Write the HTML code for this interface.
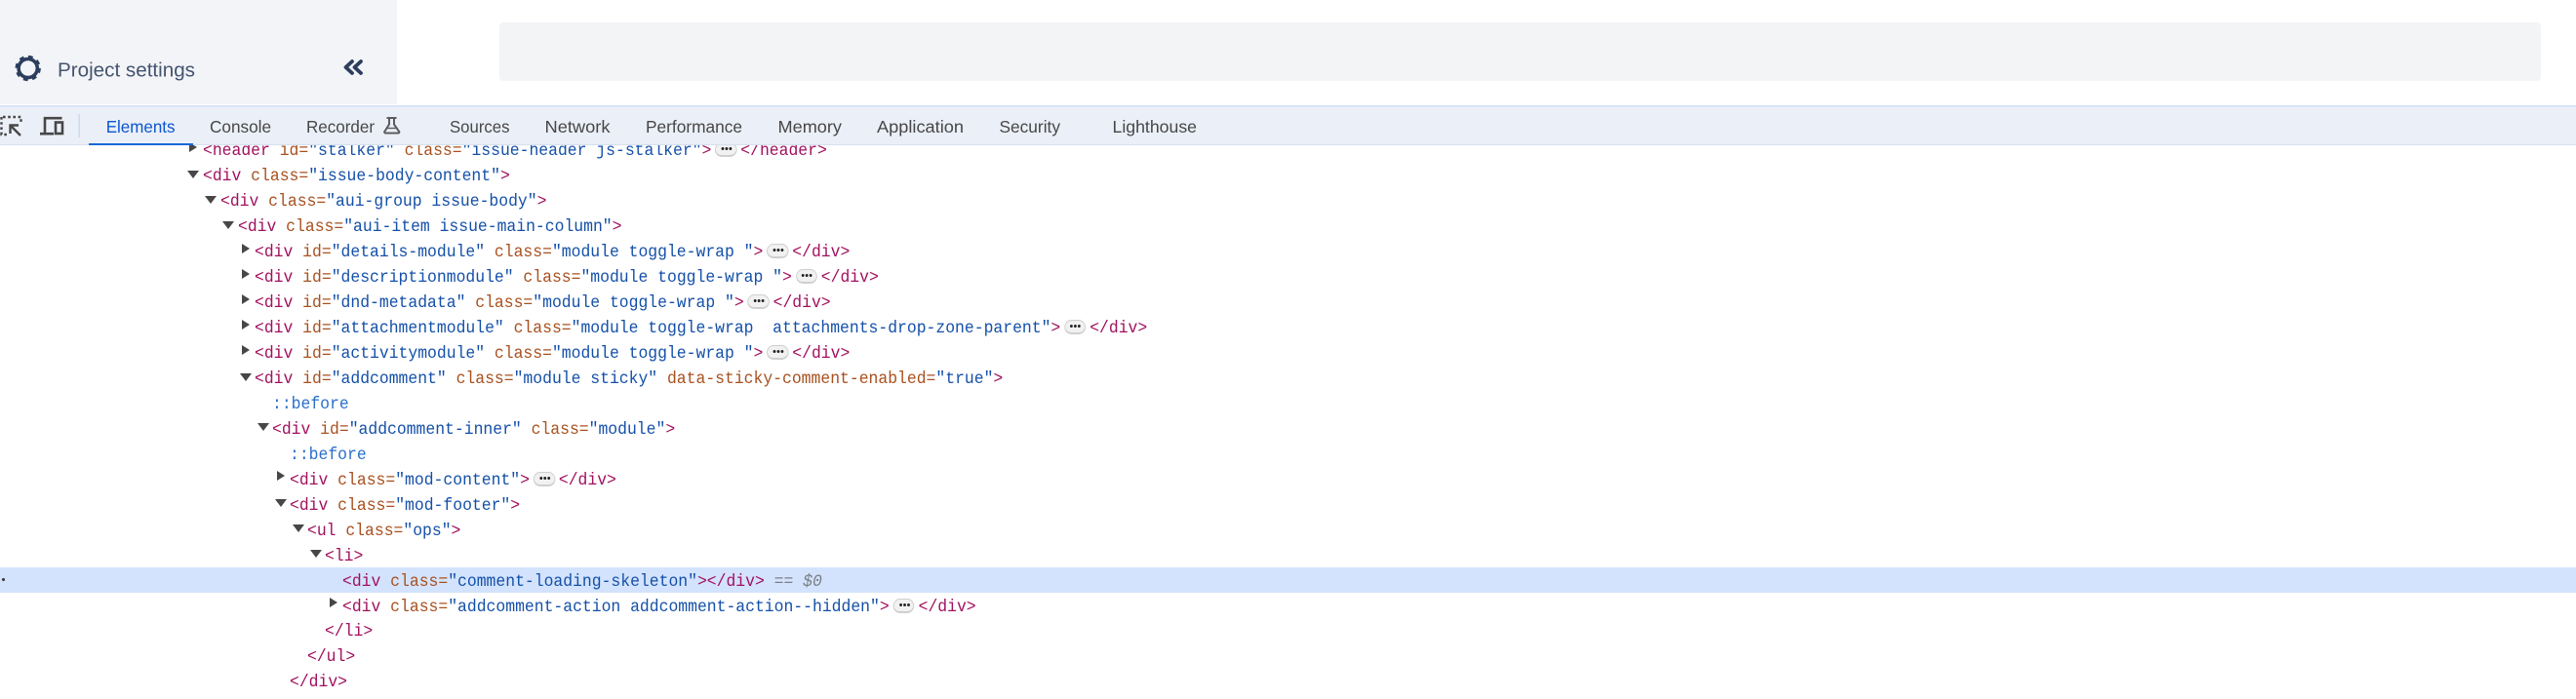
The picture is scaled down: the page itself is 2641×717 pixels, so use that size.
<!DOCTYPE html>
<html><head><meta charset="utf-8"><style>
html,body{margin:0;padding:0;background:#fff;width:2641px;height:717px;overflow:hidden}
.r{position:absolute;white-space:pre;font:17.4px/26px "Liberation Mono",monospace;height:26px;color:#a1105e;transform:translateY(1px) scaleX(.9425);transform-origin:0 0}
.a{color:#a8501f}.v{color:#1450a8}.p{color:#2a6fc9}.g{color:#7a7f87}.i{font-style:italic}
.e{display:inline-block;box-sizing:border-box;width:23.4px;height:15px;margin:0 4.2px 0 4.2px;border:1px solid #cfcfcf;border-bottom-width:2px;border-radius:8px;background:#f1f1f1;vertical-align:-2px;position:relative}
.e:after{content:"";position:absolute;left:5.5px;top:4.2px;width:3px;height:3px;border-radius:50%;background:#222;box-shadow:4.2px 0 #222,8.4px 0 #222}
.d,.c{position:absolute;width:0;height:0}
.d{border-left:6px solid transparent;border-right:6px solid transparent;border-top:8.5px solid #474747}
.c{border-top:5.5px solid transparent;border-bottom:5.5px solid transparent;border-left:8px solid #474747}
svg{position:absolute;left:0;top:0;z-index:5}
</style></head><body>
<div style="position:absolute;left:0;top:582px;width:2641px;height:26px;background:#d3e3fd"></div>

<div class="c" style="left:194px;top:146px"></div>
<div class="r" style="left:207.7px;top:142px">&lt;header <span class="a">id=</span><span class="v">"stalker"</span> <span class="a">class=</span><span class="v">"issue-header js-stalker"</span>&gt;<span class="e"></span>&lt;/header&gt;</div>

<div class="d" style="left:192px;top:175px"></div>
<div class="r" style="left:207.7px;top:168px">&lt;div <span class="a">class=</span><span class="v">"issue-body-content"</span>&gt;</div>

<div class="d" style="left:210px;top:201px"></div>
<div class="r" style="left:225.6px;top:194px">&lt;div <span class="a">class=</span><span class="v">"aui-group issue-body"</span>&gt;</div>

<div class="d" style="left:228px;top:227px"></div>
<div class="r" style="left:243.5px;top:220px">&lt;div <span class="a">class=</span><span class="v">"aui-item issue-main-column"</span>&gt;</div>

<div class="c" style="left:248px;top:250px"></div>
<div class="r" style="left:261.4px;top:246px">&lt;div <span class="a">id=</span><span class="v">"details-module"</span> <span class="a">class=</span><span class="v">"module toggle-wrap "</span>&gt;<span class="e"></span>&lt;/div&gt;</div>

<div class="c" style="left:248px;top:276px"></div>
<div class="r" style="left:261.4px;top:272px">&lt;div <span class="a">id=</span><span class="v">"descriptionmodule"</span> <span class="a">class=</span><span class="v">"module toggle-wrap "</span>&gt;<span class="e"></span>&lt;/div&gt;</div>

<div class="c" style="left:248px;top:302px"></div>
<div class="r" style="left:261.4px;top:298px">&lt;div <span class="a">id=</span><span class="v">"dnd-metadata"</span> <span class="a">class=</span><span class="v">"module toggle-wrap "</span>&gt;<span class="e"></span>&lt;/div&gt;</div>

<div class="c" style="left:248px;top:328px"></div>
<div class="r" style="left:261.4px;top:324px">&lt;div <span class="a">id=</span><span class="v">"attachmentmodule"</span> <span class="a">class=</span><span class="v">"module toggle-wrap  attachments-drop-zone-parent"</span>&gt;<span class="e"></span>&lt;/div&gt;</div>

<div class="c" style="left:248px;top:354px"></div>
<div class="r" style="left:261.4px;top:350px">&lt;div <span class="a">id=</span><span class="v">"activitymodule"</span> <span class="a">class=</span><span class="v">"module toggle-wrap "</span>&gt;<span class="e"></span>&lt;/div&gt;</div>

<div class="d" style="left:246px;top:383px"></div>
<div class="r" style="left:261.4px;top:376px">&lt;div <span class="a">id=</span><span class="v">"addcomment"</span> <span class="a">class=</span><span class="v">"module sticky"</span> <span class="a">data-sticky-comment-enabled=</span><span class="v">"true"</span>&gt;</div>

<div class="r p" style="left:279.3px;top:401.5px">::before</div>

<div class="d" style="left:264px;top:434px"></div>
<div class="r" style="left:279.3px;top:427.5px">&lt;div <span class="a">id=</span><span class="v">"addcomment-inner"</span> <span class="a">class=</span><span class="v">"module"</span>&gt;</div>

<div class="r p" style="left:297.2px;top:453.5px">::before</div>

<div class="c" style="left:284px;top:483px"></div>
<div class="r" style="left:297.2px;top:479.5px">&lt;div <span class="a">class=</span><span class="v">"mod-content"</span>&gt;<span class="e"></span>&lt;/div&gt;</div>

<div class="d" style="left:282px;top:512px"></div>
<div class="r" style="left:297.2px;top:505.5px">&lt;div <span class="a">class=</span><span class="v">"mod-footer"</span>&gt;</div>

<div class="d" style="left:300px;top:538px"></div>
<div class="r" style="left:315px;top:531.5px">&lt;ul <span class="a">class=</span><span class="v">"ops"</span>&gt;</div>

<div class="d" style="left:318px;top:564px"></div>
<div class="r" style="left:333px;top:557.5px">&lt;li&gt;</div>

<div style="position:absolute;left:2px;top:593px;width:3px;height:3px;border-radius:50%;background:#333"></div>
<div class="r" style="left:351px;top:583.5px">&lt;div <span class="a">class=</span><span class="v">"comment-loading-skeleton"</span>&gt;&lt;/div&gt; <span class="g">== </span><span class="g i">$0</span></div>

<div class="c" style="left:338px;top:613px"></div>
<div class="r" style="left:351px;top:609.5px">&lt;div <span class="a">class=</span><span class="v">"addcomment-action addcomment-action--hidden"</span>&gt;<span class="e"></span>&lt;/div&gt;</div>

<div class="r" style="left:333px;top:635px">&lt;/li&gt;</div>
<div class="r" style="left:315px;top:661px">&lt;/ul&gt;</div>
<div class="r" style="left:297.2px;top:687px">&lt;/div&gt;</div>

<svg width="2641" height="149" viewBox="0 0 2641 149" font-family="Liberation Sans, sans-serif">
<rect x="0" y="0" width="2641" height="108" fill="#fff"/>
<rect x="0" y="0" width="407" height="107" fill="#f3f4f7"/>
<rect x="512" y="23" width="2093" height="60" rx="4" fill="#f3f4f6"/>
<text x="59" y="78.7" font-size="20.5" fill="#44546f" textLength="141" lengthAdjust="spacingAndGlyphs">Project settings</text>
<g fill="none" stroke="#2c3e5d">
<circle cx="28.7" cy="70" r="9.6" stroke-width="3.6"/>
<circle cx="28.7" cy="70" r="12" stroke-width="2.4" stroke-dasharray="4.8 4.62"/>
<path d="M361 63L354.5 69L361 75M370 63L363.5 69L370 75" stroke-width="3.8" stroke-linejoin="round" stroke-linecap="round"/>
</g>
<rect x="0" y="108" width="2641" height="41" fill="#ebeff7"/>
<rect x="0" y="108" width="2641" height="1.4" fill="#cfe0f8"/>
<rect x="0" y="148" width="2641" height="1" fill="#d5dfee"/>
<rect x="80.5" y="117" width="1.3" height="24" fill="#c7d7ee"/>
<rect x="91" y="147" width="107" height="2.4" fill="#1967d8"/>
<g fill="none" stroke="#474747" stroke-width="2">
<path d="M3 120H21.5V126M1.5 120V138H8" stroke-dasharray="2.6 2.6" stroke-width="2.4"/>
<path d="M10.5 137V128.5H19M11 129L21 139" stroke-width="2.4"/>
<path d="M63.5 121.2H46V137M41 137.2H55" stroke-width="2.6"/>
<rect x="57" y="125.5" width="7" height="11.5" stroke-width="2.6"/>
<path d="M396.5 121H406.5M399 121V127.5L394.3 135a1 1 0 0 0 1 1.5H408.2a1 1 0 0 0 1-1.5L404 127.5V121" stroke="#5c5c5c"/>
<path d="M397 131.5H406.5" stroke="#5c5c5c" stroke-width="1.4"/>
</g>
<g font-size="17.6" fill="#474747">
<text x="108.7" y="136" fill="#0b57d0" textLength="70.8" lengthAdjust="spacingAndGlyphs">Elements</text>
<text x="215" y="136" textLength="63" lengthAdjust="spacingAndGlyphs">Console</text>
<text x="314" y="136" textLength="70" lengthAdjust="spacingAndGlyphs">Recorder</text>
<text x="461" y="136" textLength="61.5" lengthAdjust="spacingAndGlyphs">Sources</text>
<text x="558.5" y="136" textLength="67" lengthAdjust="spacingAndGlyphs">Network</text>
<text x="662" y="136" textLength="99" lengthAdjust="spacingAndGlyphs">Performance</text>
<text x="797.5" y="136" textLength="65.5" lengthAdjust="spacingAndGlyphs">Memory</text>
<text x="899" y="136" textLength="89" lengthAdjust="spacingAndGlyphs">Application</text>
<text x="1024.5" y="136" textLength="62.5" lengthAdjust="spacingAndGlyphs">Security</text>
<text x="1140.5" y="136" textLength="86.5" lengthAdjust="spacingAndGlyphs">Lighthouse</text>
</g>
</svg>
</body></html>
